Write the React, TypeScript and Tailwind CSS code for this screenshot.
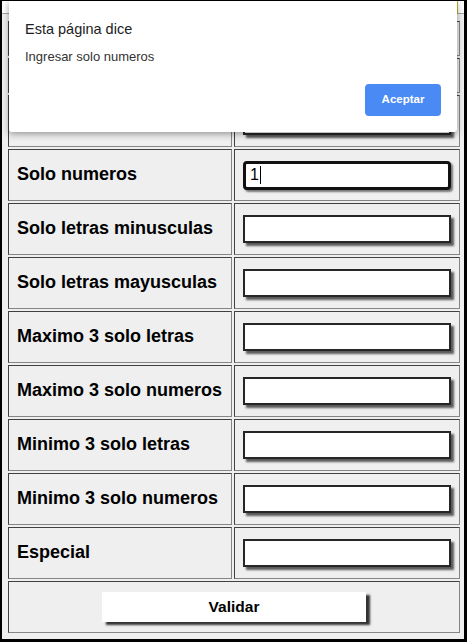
import React from "react";

const cell =
  "border border-t-[#404040] border-l-[#404040] border-r-[#858585] border-b-[#858585] bg-[#efefef]";

const fields = [
  "Solo numeros",
  "Solo letras minusculas",
  "Solo letras mayusculas",
  "Maximo 3 solo letras",
  "Maximo 3 solo numeros",
  "Minimo 3 solo letras",
  "Minimo 3 solo numeros",
  "Especial",
];

function TextBox({ focused, value }: { focused?: boolean; value?: string }) {
  if (focused) {
    return (
      <div className="flex h-[29px] w-full items-center rounded-[4px] border-[3px] border-[#111] bg-white pl-[4px] text-[16px] text-black shadow-[2px_2px_2px_#777]">
        <span>{value}</span>
        <span className="ml-px h-[18px] w-px bg-black" />
      </div>
    );
  }
  return (
    <input
      readOnly
      className="h-[28px] w-full border-2 border-[#262626] bg-white outline-none shadow-[3px_3px_2px_#5a5a5a]"
    />
  );
}

function Row({ label, children }: { label: string; children: React.ReactNode }) {
  return (
    <>
      <div className={`${cell} flex h-[52px] items-center pl-2 pb-px text-[18px] font-bold text-black`}>{label}</div>
      <div className={`${cell} flex h-[52px] items-center px-2`}>{children}</div>
    </>
  );
}

export default function App() {
  return (
    <div className="relative h-[642px] w-[467px] overflow-hidden border-t border-l-2 border-r-[3px] border-b-[3px] border-black bg-[#efefef] font-['Liberation_Sans',Arial,sans-serif]">
      <div className="h-[13px] border-b border-[#a3a3a3] bg-white" />

      <div className="pt-[7px] pl-[6px] pr-[4px]">
        <div className="grid grid-cols-[224px_226px] gap-[2px]">
          <div className={`${cell} col-span-2 flex h-[35px] items-center justify-center text-[18px] font-bold`}>
            Validaciones
          </div>
          <div className={`${cell} flex h-[35px] items-center pl-2 text-[16px] font-bold`}>Campo</div>
          <div className={`${cell} flex h-[35px] items-center pl-2 text-[16px] font-bold`}>Valor</div>
          <Row label="Obligatorio">
            <TextBox />
          </Row>
          {fields.map((f, i) => (
            <Row key={f} label={f}>
              {i === 0 ? <TextBox focused value="1" /> : <TextBox />}
            </Row>
          ))}
          <div className={`${cell} col-span-2 flex h-[52px] items-center justify-center`}>
            <button className="h-[30px] w-[264px] bg-white text-[15.5px] font-bold text-black shadow-[4px_3px_2px_#333]">
              Validar
            </button>
          </div>
        </div>
      </div>

      {/* alert dialog */}
      <div className="absolute left-[455px] top-0 h-[12px] w-px bg-[#c9b52a]" />
      <div className="absolute left-[7px] top-0 flex h-[131px] w-[448px] flex-col rounded-b-[3px] bg-white px-4 pt-[18px] pb-4 shadow-[0_2px_7px_rgba(0,0,0,0.38)]">
        <div className="text-[14.5px] leading-[20px] text-[#202124]">Esta página dice</div>
        <div className="mt-[10px] text-[13px] leading-[16px] text-[#333]">Ingresar solo numeros</div>
        <div className="mt-auto flex justify-end">
          <button className="h-[32px] w-[76px] rounded-[4px] bg-[#4a8af4] text-[11.5px] font-bold text-white">
            Aceptar
          </button>
        </div>
      </div>
    </div>
  );
}
